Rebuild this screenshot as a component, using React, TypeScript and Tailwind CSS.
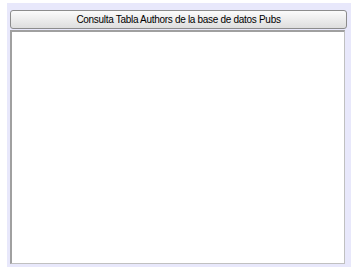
export default function App() {
  return (
    <div className="w-[362px] h-[273px] bg-white pt-[3px] pl-[7px]">
      <div className="w-[344px] h-[264px] bg-[#e8e8fb] pt-[7px] pl-[3px] pr-[4px] flex flex-col">
        <div
          className="h-[19px] rounded-[3px] border border-[#8c8c8c] bg-gradient-to-b from-[#fbfbfb] to-[#dedede] flex items-center justify-center text-[10px] tracking-[-0.3px] text-black"
          style={{ fontFamily: '"Liberation Sans", Arial, sans-serif' }}
        >
          Consulta Tabla Authors de la base de datos Pubs
        </div>
        <div className="mt-[1px] h-[234px] bg-white border-l-2 border-t-2 border-[#a0a0a0] border-r border-b border-r-[#c0c0c0] border-b-[#c0c0c0] mr-[2px]" />
      </div>
    </div>
  );
}
